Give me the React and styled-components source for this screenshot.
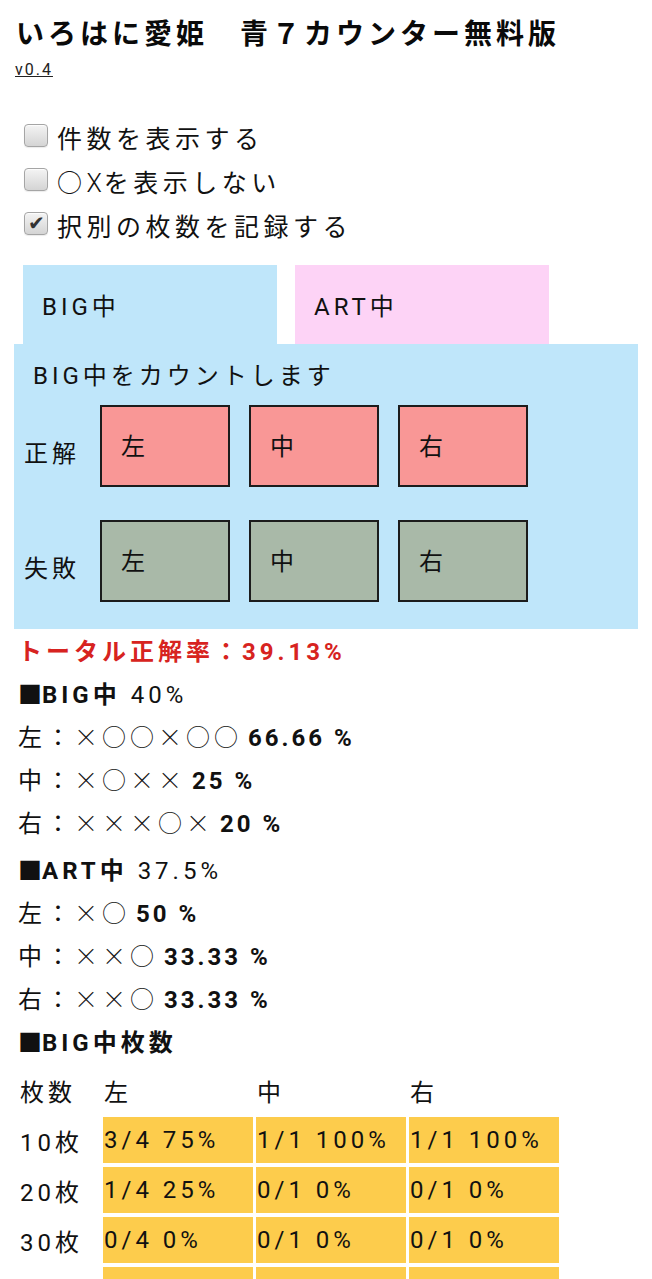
import React, { useState } from 'react'
import styled, { createGlobalStyle } from 'styled-components'

const GlobalStyle = createGlobalStyle`
  body {
    margin: 0;
    background: #fff;
    color: #111;
    font-family: Roboto, "Noto Sans CJK JP", sans-serif;
  }
`

const Page = styled.div`
  padding: 0 14px 40px;
  letter-spacing: 4px;
  font-size: 24px;
`

const Title = styled.h1`
  margin: 17px 0 0 2px;
  font-size: 28px;
  line-height: 36px;
  letter-spacing: 4px;
  font-weight: bold;
  color: #0a0a0a;
`

const Version = styled.a`
  display: inline-block;
  margin: 5px 0 0 1px;
  font-size: 16px;
  line-height: 20px;
  letter-spacing: 2px;
  color: #222;
  text-decoration: underline;
`

const Options = styled.div`
  margin: 34px 0 0 10px;
`

const OptionRow = styled.label`
  display: flex;
  align-items: center;
  height: 44px;
  font-size: 25px;
  letter-spacing: 4.5px;
  cursor: pointer;
  input { display: none; }
`

const Light = styled.span`
  font-weight: 300;
  letter-spacing: 2px;
`

const Box = styled.span`
  width: 22px;
  height: 21px;
  margin: 0 9px 4px 0;
  border: 1px solid #a5a5a5;
  border-radius: 4px;
  background: linear-gradient(#f4f4f4, #d4d4d4);
  box-shadow: inset 0 1px 1px rgba(255,255,255,0.8), 0 1px 1px rgba(0,0,0,0.08);
  display: flex;
  align-items: center;
  justify-content: center;
  font-size: 20px;
  line-height: 1;
  letter-spacing: 0;
  color: #333;
  flex-shrink: 0;
`

const Tabs = styled.div`
  display: flex;
  gap: 18px;
  margin: 18px 0 0 9px;
`

const Tab = styled.div`
  width: 254px;
  height: 79px;
  box-sizing: border-box;
  padding: 0 0 0 19px;
  display: flex;
  align-items: center;
  background: ${p => p.$bg};
  cursor: pointer;
`

const Panel = styled.div`
  background: ${p => p.$bg};
  padding: 16px 0 27px 10px;
`

const PanelTitle = styled.div`
  line-height: 32px;
  margin: 0 0 13px 9px;
`

const CountRow = styled.div`
  display: flex;
  align-items: center;
  & + & { margin-top: 33px; }
`

const RowLabel = styled.div`
  width: 76px;
  padding-top: 15px;
  line-height: 32px;
`

const Buttons = styled.div`
  display: flex;
  gap: 19px;
`

const CountButton = styled.button`
  width: 130px;
  height: 82px;
  box-sizing: border-box;
  border: 2px solid #1c1c1c;
  background: ${p => (p.$kind === 'ok' ? '#f99796' : '#a9b9a8')};
  font: inherit;
  color: #111;
  text-align: left;
  padding: 0 0 4px 19px;
  cursor: pointer;
`

const Results = styled.div`
  margin: 2px 0 0 4px;
  line-height: 43px;
`

const Line = styled.div`
  height: 43px;
  white-space: nowrap;
`

const Total = styled(Line)`
  color: #d72320;
  font-weight: bold;
`

const Section = styled.div`
  margin-top: ${p => p.$gap || 0}px;
`

const Square = styled.span`
  font-family: "Noto Sans CJK JP", sans-serif;
  line-height: 1;
  letter-spacing: 0;
`

const Marks = styled.span`
  font-family: "Noto Sans CJK JP", sans-serif;
  font-weight: 300;
  line-height: 1;
`

const Rate = styled.b`
  font-weight: bold;
  margin-left: 6px;
  letter-spacing: 3px;
`

const CountTable = styled.table`
  margin: -2px 0 0 2px;
  border-spacing: 3px 4px;
`

const Th = styled.th`
  font-weight: normal;
  text-align: left;
  height: 46px;
  padding: 0 1px;
`

const LabelCell = styled.td`
  width: 79px;
  height: 46px;
  padding: 0 1px;
`

const Td = styled.td`
  width: 148px;
  height: 46px;
  padding: 0 1px;
  background: #fdcc4c;
  white-space: nowrap;
`

const stats = [
  {
    name: 'BIG中',
    rate: '40%',
    gap: 0,
    lines: [
      ['左', '×○○×○○', '66.66 %'],
      ['中', '×○××', '25 %'],
      ['右', '×××○×', '20 %'],
    ],
  },
  {
    name: 'ART中',
    rate: '37.5%',
    gap: 4,
    lines: [
      ['左', '×○', '50 %'],
      ['中', '××○', '33.33 %'],
      ['右', '××○', '33.33 %'],
    ],
  },
]

const table = [
  ['10枚', '3/4 75%', '1/1 100%', '1/1 100%'],
  ['20枚', '1/4 25%', '0/1 0%', '0/1 0%'],
  ['30枚', '0/4 0%', '0/1 0%', '0/1 0%'],
  ['40枚', '0/4 0%', '0/1 0%', '0/1 0%'],
]

const tabColors = { BIG: '#bfe6fa', ART: '#fdd3f6' }

const App = () => {
  const [opts, setOpts] = useState([false, false, true])
  const [mode, setMode] = useState('BIG')
  const labels = [
    '件数を表示する',
    <>○<Light>X</Light>を表示しない</>,
    '択別の枚数を記録する',
  ]

  const toggle = i => setOpts(o => o.map((v, j) => (j === i ? !v : v)))

  return (
    <Page>
      <GlobalStyle />
      <Title>いろはに愛姫　青７カウンター無料版</Title>
      <Version href="#">v0.4</Version>

      <Options>
        {labels.map((l, i) => (
          <OptionRow key={i}>
            <input type="checkbox" checked={opts[i]} onChange={() => toggle(i)} />
            <Box>{opts[i] ? '✔' : ''}</Box>
            <span>{l}</span>
          </OptionRow>
        ))}
      </Options>

      <Tabs>
        <Tab $bg={tabColors.BIG} onClick={() => setMode('BIG')}>BIG中</Tab>
        <Tab $bg={tabColors.ART} onClick={() => setMode('ART')}>ART中</Tab>
      </Tabs>
      <Panel $bg={tabColors[mode]}>
        <PanelTitle>{mode}中をカウントします</PanelTitle>
        <CountRow>
          <RowLabel>正解</RowLabel>
          <Buttons>
            {['左', '中', '右'].map(s => <CountButton key={s} $kind="ok">{s}</CountButton>)}
          </Buttons>
        </CountRow>
        <CountRow>
          <RowLabel>失敗</RowLabel>
          <Buttons>
            {['左', '中', '右'].map(s => <CountButton key={s} $kind="ng">{s}</CountButton>)}
          </Buttons>
        </CountRow>
      </Panel>

      <Results>
        <Total>トータル正解率：39.13%</Total>
        {stats.map(s => (
          <Section key={s.name} $gap={s.gap}>
            <Line><Square>■</Square><b>{s.name}</b> {s.rate}</Line>
            {s.lines.map(([pos, marks, rate]) => (
              <Line key={pos}>
                {pos}：<Marks>{marks}</Marks><Rate>{rate}</Rate>
              </Line>
            ))}
          </Section>
        ))}
        <Line><Square>■</Square><b>BIG中枚数</b></Line>
      </Results>

      <CountTable>
        <thead>
          <tr>
            <Th>枚数</Th>
            <Th>左</Th>
            <Th>中</Th>
            <Th>右</Th>
          </tr>
        </thead>
        <tbody>
          {table.map(([label, ...cells]) => (
            <tr key={label}>
              <LabelCell>{label}</LabelCell>
              {cells.map((c, i) => <Td key={i}>{c}</Td>)}
            </tr>
          ))}
        </tbody>
      </CountTable>
    </Page>
  )
}

export default App
